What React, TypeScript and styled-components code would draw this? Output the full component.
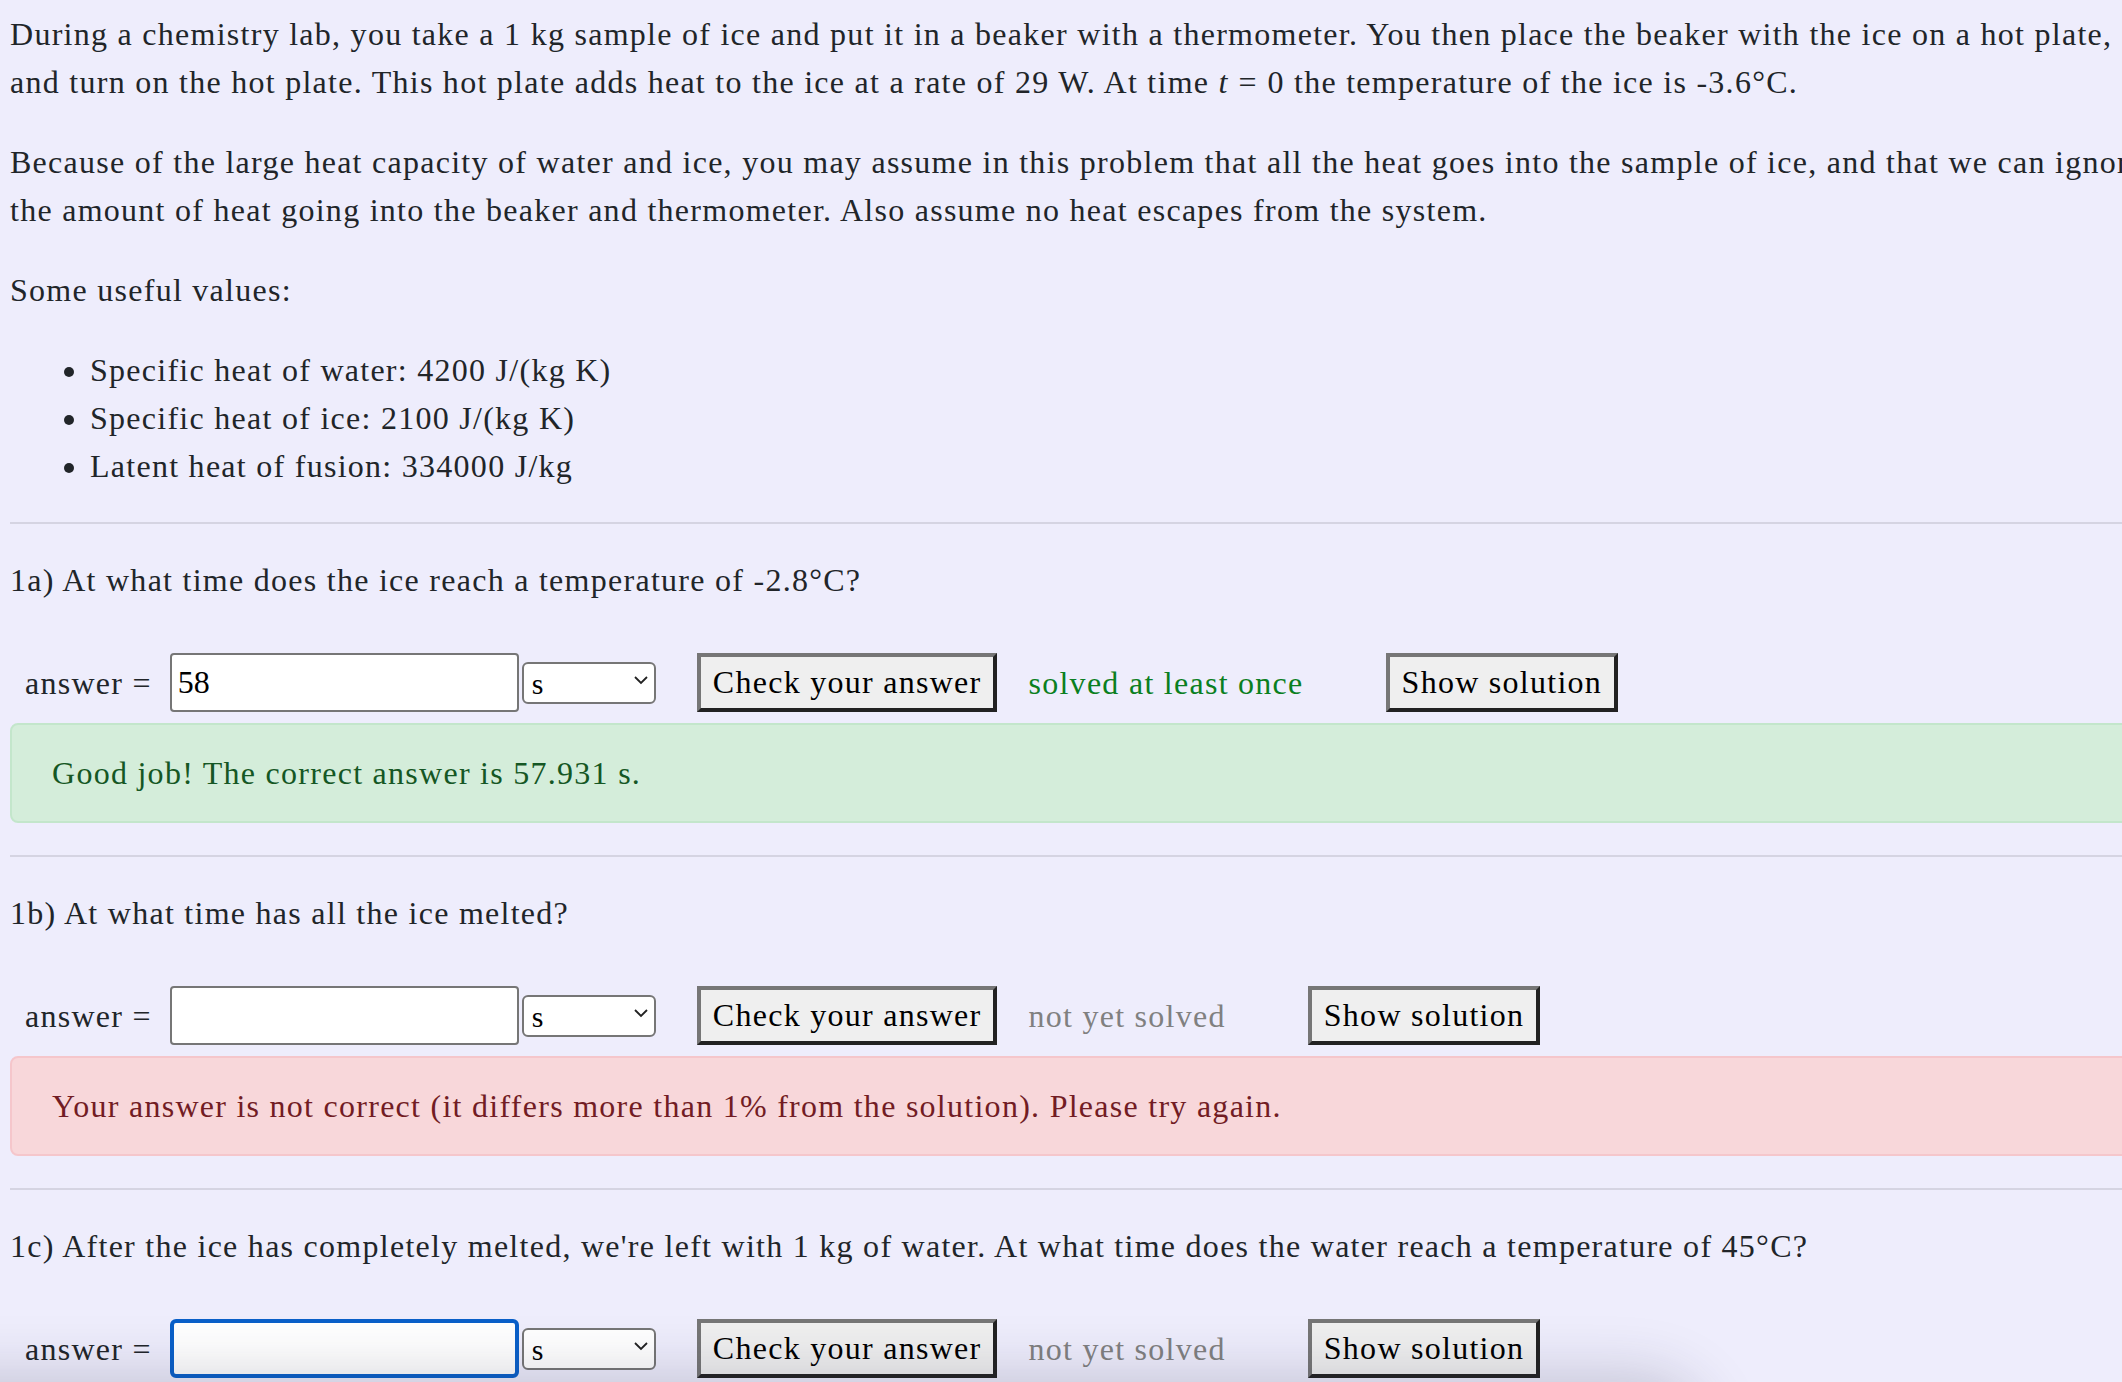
import React from 'react';
import styled, { createGlobalStyle } from 'styled-components';

const GlobalStyle = createGlobalStyle`
  html, body {
    margin: 0;
    padding: 0;
    background: #eeedfc;
    overflow: hidden;
  }
  body {
    font-family: "Liberation Serif", "DejaVu Serif", serif;
    color: #212529;
  }
`;

// the sheet is a bit wider than the window, so long lines run out at the right
const Page = styled.div`
  width: 2146px;
  padding: 10px 0 0 10px;
  font-size: 32px;
  line-height: 48px;
  letter-spacing: 1.27px;
`;

const Para = styled.p`
  margin: 0 0 32px;
`;

const MathT = styled.i`
  letter-spacing: 0;
`;

const MathOp = styled.span`
  letter-spacing: 0;
  padding: 0 11px;
`;

const ValueList = styled.ul`
  margin: 0 0 32px;
  padding-left: 80px;
`;

const Rule = styled.hr`
  margin: 32px 0;
  border: 0;
  border-top: 2px solid rgba(0, 0, 0, 0.1);
`;

const Title = styled.p`
  margin: 0 0 32px;
`;

const AnswerRow = styled.div`
  display: flex;
  align-items: center;
  padding: 17px 15px 0;
  margin-bottom: 11px;
`;

const Label = styled.span`
  margin-right: 18px;
  white-space: nowrap;
`;

const ValueInput = styled.input<{ $focused?: boolean }>`
  box-sizing: border-box;
  width: 349px;
  height: 59px;
  margin: 0 3px 0 0;
  padding: 0 6px;
  font-family: "Liberation Serif", serif;
  font-size: 32px;
  color: #000;
  background: #fff;
  border: ${(p) => (p.$focused ? '4px solid #0a60c9' : '2px solid #767676')};
  border-radius: ${(p) => (p.$focused ? '6px' : '4px')};
  outline: none;
`;

const UnitBox = styled.div`
  position: relative;
  margin-right: 41px;
`;

const UnitSelect = styled.select`
  appearance: none;
  box-sizing: border-box;
  width: 134px;
  height: 42px;
  padding: 0 8px;
  font-family: "Liberation Serif", serif;
  font-size: 30px;
  color: #000;
  background: #fff;
  border: 2px solid #767676;
  border-radius: 6px;
`;

const Chevron = styled.svg`
  position: absolute;
  right: 7px;
  top: 16px;
  width: 16px;
  height: 10px;
  pointer-events: none;
`;

const Button = styled.button`
  box-sizing: border-box;
  height: 59px;
  padding: 0 12px;
  font-family: "Liberation Serif", "DejaVu Serif", serif;
  font-size: 32px;
  letter-spacing: 1.27px;
  color: #000;
  background: #efefef;
  border: 4px solid;
  border-color: #767676 #222 #222 #767676;
  white-space: nowrap;
`;

const Status = styled.span<{ $solved: boolean }>`
  margin: 0 82px 0 31px;
  color: ${(p) => (p.$solved ? '#0a7f21' : '#808080')};
  white-space: nowrap;
`;

const Alert = styled.div<{ $kind: 'success' | 'danger' }>`
  margin: 0 0 32px;
  padding: 24px 40px;
  border: 2px solid ${(p) => (p.$kind === 'success' ? '#c3e6cb' : '#f5c6cb')};
  border-radius: 8px;
  background: ${(p) => (p.$kind === 'success' ? '#d4edda' : '#f8d7da')};
  color: ${(p) => (p.$kind === 'success' ? '#155724' : '#721c24')};
`;

// shadow of something sitting just under the visible window
const EdgeShade = styled.div`
  position: fixed;
  left: -200px;
  bottom: -200px;
  width: 1900px;
  height: 200px;
  border-radius: 60px;
  box-shadow: 0 0 60px 6px rgba(40, 40, 70, 0.22);
  pointer-events: none;
`;

type Question = {
  id: string;
  text: string;
  value: string;
  solved: boolean;
  focused?: boolean;
  alert?: { kind: 'success' | 'danger'; text: string };
};

const questions: Question[] = [
  {
    id: '1a',
    text: '1a) At what time does the ice reach a temperature of -2.8°C?',
    value: '58',
    solved: true,
    alert: { kind: 'success', text: 'Good job! The correct answer is 57.931 s.' },
  },
  {
    id: '1b',
    text: '1b) At what time has all the ice melted?',
    value: '',
    solved: false,
    alert: {
      kind: 'danger',
      text: 'Your answer is not correct (it differs more than 1% from the solution). Please try again.',
    },
  },
  {
    id: '1c',
    text: "1c) After the ice has completely melted, we're left with 1 kg of water. At what time does the water reach a temperature of 45°C?",
    value: '',
    solved: false,
    focused: true,
  },
];

const QuestionBlock = ({ q }: { q: Question }) => (
  <div>
    <Rule />
    <Title>{q.text}</Title>
    <AnswerRow>
      <Label>answer =</Label>
      <ValueInput $focused={q.focused} defaultValue={q.value} />
      <UnitBox>
        <UnitSelect defaultValue="s">
          <option value="s">s</option>
          <option value="min">min</option>
        </UnitSelect>
        <Chevron viewBox="0 0 16 10">
          <path d="M2 2 L8 8 L14 2" fill="none" stroke="#222" strokeWidth="1.8" />
        </Chevron>
      </UnitBox>
      <Button>Check your answer</Button>
      <Status $solved={q.solved}>{q.solved ? 'solved at least once' : 'not yet solved'}</Status>
      <Button>Show solution</Button>
    </AnswerRow>
    {q.alert ? <Alert $kind={q.alert.kind}>{q.alert.text}</Alert> : null}
  </div>
);

export default function App() {
  return (
    <>
      <GlobalStyle />
      <Page>
        <Para>
          During a chemistry lab, you take a 1 kg sample of ice and put it in a beaker with a
          thermometer. You then place the beaker with the ice on a hot plate, and turn on the hot
          plate. This hot plate adds heat to the ice at a rate of 29 W. At time{' '}
          <MathT>t</MathT><MathOp>=</MathOp>0 the temperature of the ice is -3.6°C.
        </Para>
        <Para>
          Because of the large heat capacity of water and ice, you may assume in this problem that
          all the heat goes into the sample of ice, and that we can ignore the amount of heat going
          into the beaker and thermometer. Also assume no heat escapes from the system.
        </Para>
        <Para>Some useful values:</Para>
        <ValueList>
          <li>Specific heat of water: 4200 J/(kg K)</li>
          <li>Specific heat of ice: 2100 J/(kg K)</li>
          <li>Latent heat of fusion: 334000 J/kg</li>
        </ValueList>
        {questions.map((q) => (
          <QuestionBlock key={q.id} q={q} />
        ))}
      </Page>
      <EdgeShade />
    </>
  );
}
